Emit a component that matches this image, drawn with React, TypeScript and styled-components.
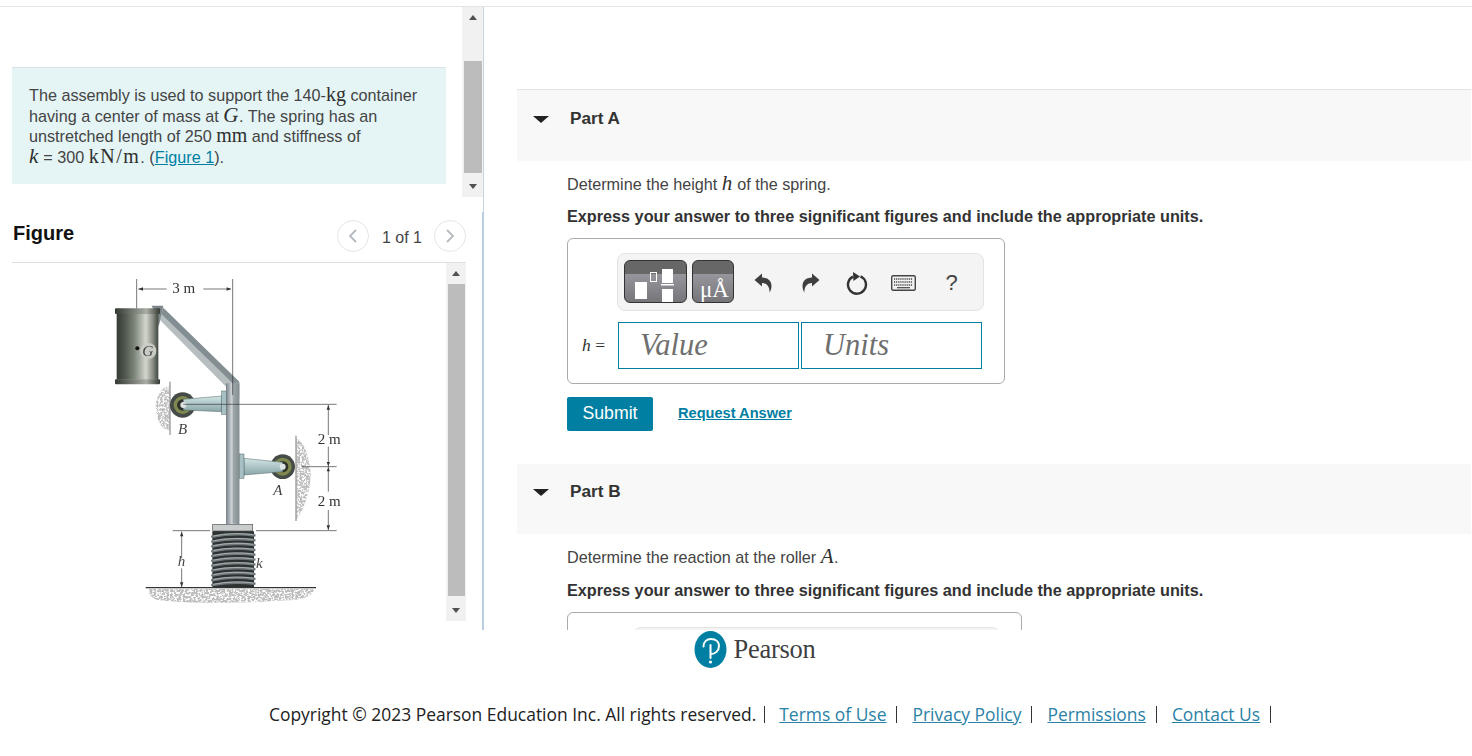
import React from "react";
import styled, { createGlobalStyle } from "styled-components";

const Global = createGlobalStyle`
  html, body { margin: 0; padding: 0; height: 756px; overflow: hidden; background: #fff; }
  body { font-family: "Liberation Sans", Arial, sans-serif; color: #3d3d3d; }
`;

const Page = styled.div`width: 1472px; height: 756px; display: flex; flex-direction: column; overflow: hidden;`;
const TopBar = styled.div`height: 6px; border-bottom: 1px solid #e2e4e6; flex: none;`;
const Workspace = styled.div`height: 623px; flex: none; display: flex; overflow: hidden;`;
const LeftPane = styled.aside`width: 484px; flex: none; display: flex; flex-direction: column;`;
const TopRegion = styled.div`height: 205px; flex: none; display: flex; align-items: flex-start; border-right: 1px solid #c5d5e3;`;
const IntroColumn = styled.div`width: 462px; flex: none; padding: 60px 16px 0 12px; box-sizing: border-box;`;
const IntroBox = styled.div`
  height: 117px; box-sizing: border-box; background: #e5f5f6; border-top: 1px solid #dbe3e6;
  padding: 17px 10px 0 17px; font-size: 16.2px; line-height: 20.5px; color: #444;
`;
const MathText = styled.span<{ $italic?: boolean; $wide?: boolean }>`
  font-family: "Liberation Serif", "Times New Roman", serif; font-size: ${(p) => (p.$italic ? 21 : 20)}px; color: #2f2f2f;
  font-style: ${(p) => (p.$italic ? "italic" : "normal")};
  letter-spacing: ${(p) => (p.$wide ? "1.5px" : p.$italic ? "0.5px" : "0")};
  line-height: 16px;
`;
const Link = styled.a<{ $bold?: boolean }>`
  color: #007fa3; text-decoration: underline; font-weight: ${(p) => (p.$bold ? 700 : 400)};
`;
const Track = styled.div<{ $height: number; $width: number }>`
  flex: none; width: ${(p) => p.$width}px; height: ${(p) => p.$height}px; background: #f1f1f1;
  display: flex; flex-direction: column; align-items: center; position: relative;
`;
const ArrowCell = styled.div`height: 21px; flex: none; width: 100%; display: flex; align-items: center; justify-content: center;`;
const ArrowUp = styled.span`width: 0; height: 0; border-left: 4.5px solid transparent; border-right: 4.5px solid transparent; border-bottom: 5px solid #505050;`;
const ArrowDown = styled.span`width: 0; height: 0; border-left: 4.5px solid transparent; border-right: 4.5px solid transparent; border-top: 5px solid #505050;`;
const Thumb = styled.div<{ $top: number; $height: number }>`
  width: calc(100% - 3px); height: ${(p) => p.$height}px; margin-top: ${(p) => p.$top}px; background: #bcbcbc; flex: none;
`;
const Spacer = styled.div`flex: 1;`;

const LowerRegion = styled.div`flex: 1; border-right: 2px solid #b9cee0; width: 482px; box-sizing: content-box;`;
const FigureHeader = styled.div`
  margin-left: 12px; width: 454px; height: 48px; padding-bottom: 2px; border-bottom: 1px solid #e0e0e0; box-sizing: content-box;
  display: flex; align-items: center;
`;
const FigureTitle = styled.h2`margin: 0 0 7px 1px; font-size: 20px; line-height: 22px; font-weight: 700; color: #111; flex: 1;`;
const PagerCircle = styled.span`
  width: 30px; height: 30px; border: 1px solid #e6e6e6; border-radius: 50%; flex: none;
  display: flex; align-items: center; justify-content: center;
`;
const PagerText = styled.span`font-size: 16px; color: #444; margin: 4px 12px 0 13px;`;
const FigureBody = styled.div`margin-left: 12px; display: flex; height: 358px; width: 454px;`;
const FigureArea = styled.div`width: 434px; flex: none; padding: 2px 0 0 88px; box-sizing: border-box;`;

const RightPane = styled.main`flex: 1; padding: 82px 1px 0 33px; min-width: 0; overflow: hidden;`;
const PartHeader = styled.div<{ $first?: boolean }>`
  height: ${(p) => (p.$first ? 72 : 70)}px; box-sizing: border-box; background: #f8f8f8;
  border-top: ${(p) => (p.$first ? "1px solid #e2e2e2" : "none")};
  margin-top: ${(p) => (p.$first ? 0 : 33)}px;
  display: flex; align-items: flex-start; padding: ${(p) => (p.$first ? 18 : 17)}px 0 0 16px;
`;
const Caret = styled.span`width: 0; height: 0; border-left: 8px solid transparent; border-right: 8px solid transparent; border-top: 7px solid #222; margin: 8px 21px 0 0;`;
const PartTitle = styled.h3`margin: 0; font-size: 17.2px; line-height: 20px; font-weight: 700; color: #333;`;
const PartBody = styled.section`padding: 13px 0 0 50px;`;
const Prompt = styled.p`margin: 0; font-size: 16.2px; line-height: 20px; color: #444;`;
const Instruction = styled.p<{ $gap: number }>`margin: ${(p) => p.$gap}px 0 0; font-size: 16.23px; line-height: 20px; font-weight: 700; color: #333;`;
const AnswerBox = styled.div<{ $width: number; $tall?: boolean }>`
  width: ${(p) => p.$width}px; height: ${(p) => (p.$tall ? 146 : 40)}px; box-sizing: border-box; margin-top: 12px;
  border: 1px solid #aaa; border-radius: 6px; padding: 14px 0 0 49px; position: relative;
`;
const Toolbar = styled.div`
  width: 367px; height: 58px; box-sizing: border-box; background: #f4f4f4; border: 1px solid #e3e3e3; border-radius: 8px;
  display: flex; align-items: center; padding: 0 0 0 6px;
`;
const MiniToolbar = styled(Toolbar)<{ $offset: number }>`margin-left: ${(p) => p.$offset}px;`;
const TemplateButton = styled.div<{ $width: number }>`
  width: ${(p) => p.$width}px; height: 43px; flex: none; box-sizing: border-box; border: 1px solid #333; border-radius: 6px;
  background: linear-gradient(#676767 0, #676767 13px, #97969c 13px, #76757a 100%); margin: 0 5px 1px 0; overflow: hidden;
  position: relative;
`;
const ToolIcons = styled.div`display: flex; align-items: center; flex: 1; margin-top: 2px;`;
const ToolSlot = styled.span<{ $width: number }>`
  width: ${(p) => p.$width}px; flex: none; display: flex; justify-content: center; align-items: center;
  font-size: 22px; color: #444; height: 30px;
`;
const InputRow = styled.div`display: flex; align-items: center; margin: 11px 0 0 -35px;`;
const InputLabel = styled.span`width: 36px; flex: none; font-family: "Liberation Serif", serif; font-size: 17.5px; color: #333;`;
const FieldBox = styled.div`
  width: 181px; height: 47px; box-sizing: border-box; border: 1px solid #007fa3; margin-right: 2px; padding: 0 0 0 21px;
  display: flex; align-items: center; font-family: "Liberation Serif", serif; font-style: italic; font-size: 30.5px; color: #6f6f6f;
`;
const Actions = styled.div`display: flex; align-items: center; margin-top: 13px; height: 34px;`;
const SubmitButton = styled.div`
  width: 86px; height: 34px; padding-bottom: 2px; box-sizing: border-box; background: #007fa3; border-radius: 2px; color: #fff; font-size: 17.7px;
  display: flex; align-items: center; justify-content: center; margin-right: 25px;
`;
const ActionLink = styled(Link)`font-size: 14.6px; margin-top: -2px;`;

const Footer = styled.footer`flex: 1; display: flex; flex-direction: column; align-items: center; min-height: 0;`;
const Brand = styled.div`display: flex; align-items: center; height: 38px; margin: 0 0 0 37px; gap: 7px;`;
const BrandName = styled.span`font-family: "Liberation Serif", serif; font-size: 26.5px; color: #3f3f3f; letter-spacing: -0.3px;`;
const Legal = styled.div`
  font-family: "Open Sans", sans-serif; font-size: 17.45px; color: #222; margin: 34px 0 0 83px; white-space: nowrap; display: flex; line-height: 24px;
`;
const LegalLink = styled.a`color: #2a82a6; text-decoration: underline;`;
const LegalSep = styled.span<{ $first?: boolean }>`
  border-left: 1.5px solid #333; height: 17px; margin: 4px ${(p) => (p.$first ? 14 : 15)}px 0 ${(p) => (p.$first ? 8 : 10)}px;
`;

const Chevron = ({ dir }: { dir: "l" | "r" }) => (
  <svg width="12" height="16" viewBox="0 0 12 16">
    <path d={dir === "l" ? "M9 2 L3 8 L9 14" : "M3 2 L9 8 L3 14"} fill="none" stroke="#b5b9c0" strokeWidth="1.8" />
  </svg>
);

const Drawing = () => (
  <svg width="260" height="350" viewBox="0 0 780 1050">
    <defs>
      <linearGradient id="can" x1="0" x2="1" y1="0" y2="0">
        <stop offset="0" stopColor="#343a33" /><stop offset=".22" stopColor="#545c50" /><stop offset=".42" stopColor="#7b8377" />
        <stop offset=".7" stopColor="#d3d6cd" /><stop offset=".86" stopColor="#8d9389" /><stop offset="1" stopColor="#3f463d" />
      </linearGradient>
      <linearGradient id="post" x1="0" x2="1" y1="0" y2="0">
        <stop offset="0" stopColor="#78828a" /><stop offset=".45" stopColor="#d3d8da" /><stop offset="1" stopColor="#7a8488" />
      </linearGradient>
      <linearGradient id="arm" x1="0" x2="0" y1="0" y2="1">
        <stop offset="0" stopColor="#d2e5e5" /><stop offset="1" stopColor="#8aa6a8" />
      </linearGradient>
      <linearGradient id="cap" x1="0" x2="1" y1="0" y2="0">
        <stop offset="0" stopColor="#333932" /><stop offset=".7" stopColor="#a9ada4" /><stop offset="1" stopColor="#333932" />
      </linearGradient>
      <filter id="soft"><feGaussianBlur stdDeviation="1.6" /></filter>
      <filter id="txt"><feGaussianBlur stdDeviation=".8" /></filter>
      <filter id="speck" x="-5%" y="-5%" width="110%" height="110%">
        <feTurbulence type="fractalNoise" baseFrequency=".16" numOctaves="2" seed="4" result="n" />
        <feColorMatrix in="n" values="0 0 0 0 1 0 0 0 0 1 0 0 0 0 1 0 0 0 5 -2.2" result="w" />
        <feComposite in="w" in2="SourceAlpha" operator="in" result="ws" />
        <feMerge result="m"><feMergeNode in="SourceGraphic" /><feMergeNode in="ws" /></feMerge>
        <feGaussianBlur in="m" stdDeviation="2" />
      </filter>
    </defs>
    <g filter="url(#speck)" fill="#bcbcbc">
      <path d="M208 362 C185 365 178 385 170 405 C162 430 172 470 190 490 L208 495 Z" />
      <path d="M590 522 C612 530 625 570 632 620 C632 670 615 730 590 762 Z" />
      <path d="M143 972 H642 C640 990 615 1005 560 1006 C400 1018 240 1014 170 1004 C152 998 145 985 143 972 Z" />
    </g>
    <g filter="url(#soft)">
      <path d="M185 130 L418 352 V400 H378 V365 L180 165 Z" fill="#b7bec0" />
      <rect x="378" y="355" width="40" height="422" fill="url(#post)" />
      <path d="M190 128 L418 350 L400 356 L185 148 Z" fill="#838e92" />
      <path d="M398 345 L418 352 V775 H398 Z" fill="#8b9599" opacity=".65" />
      <path d="M155 122 H190 L176 185 L168 150 Z" fill="#7c8689" />
      <rect x="50" y="146" width="125" height="198" fill="url(#can)" />
      <rect x="45" y="130" width="135" height="17" rx="3" fill="url(#cap)" />
      <rect x="45" y="343" width="135" height="15" rx="3" fill="url(#cap)" />
      <circle cx="145" cy="258" r="24" fill="#c8ccc4" />
      <circle cx="248" cy="420" r="38" fill="#454b46" />
      <circle cx="248" cy="420" r="27" fill="#7f8850" />
      <circle cx="248" cy="420" r="17" fill="#2f332c" />
      <path d="M250 403 L365 393 V440 L250 435 Z" fill="url(#arm)" stroke="#566" strokeWidth="1.5" />
      <circle cx="250" cy="420" r="9" fill="#dfe4e4" />
      <rect x="365" y="378" width="14" height="70" fill="#a6c0c3" stroke="#566" strokeWidth="1.5" />
      <circle cx="548" cy="605" r="37" fill="#454b46" />
      <circle cx="548" cy="605" r="27" fill="#7f8850" />
      <circle cx="548" cy="605" r="17" fill="#2f332c" />
      <path d="M432 580 L548 592 V620 L432 630 Z" fill="url(#arm)" stroke="#566" strokeWidth="1.5" />
      <circle cx="548" cy="605" r="9" fill="#dfe4e4" />
      <rect x="418" y="567" width="14" height="73" fill="#a6c0c3" stroke="#566" strokeWidth="1.5" />
      <rect x="337" y="798" width="125" height="170" rx="3" fill="#2c3031" />
      <rect x="338" y="778" width="120" height="20" fill="#c9cdce" stroke="#555" strokeWidth="2" />
      {Array.from({ length: 11 }, (_, i) => (
        <g key={i} fill="none">
          <path d={`M337 ${815 + i * 14.5} Q400 ${803 + i * 14.5} 463 ${811 + i * 14.5}`} stroke="#70777a" strokeWidth="8" strokeLinecap="round" />
          <path d={`M340 ${813 + i * 14.5} Q400 ${801 + i * 14.5} 460 ${809 + i * 14.5}`} stroke="#b4babb" strokeWidth="2.5" />
        </g>
      ))}
    </g>
    <circle cx="112" cy="250" r="6" fill="#111" />
    <g stroke="#333" strokeWidth="2" fill="none">
      <path d="M110 42 V130 M398 42 V390 M115 72 H200 M310 72 H392" />
      <path d="M210 350 V510 M588 512 V768" />
      <path d="M250 418 H710 M605 605 H710 M218 797 H330 M468 797 H710" />
      <path d="M685 420 V510 M685 545 V680 M685 735 V795 M245 800 V880 M245 910 V966" />
      <path d="M137 968 H648" strokeWidth="4" />
    </g>
    <g fill="#333">
      <path d="M115 72 l14 -5 v10 Z M394 72 l-14 -5 v10 Z M685 420 l-5 14 h10 Z M685 795 l-5 -14 h10 Z M685 603 l-5 -12 h10 Z M685 607 l-5 12 h10 Z M245 800 l-5 14 h10 Z M245 966 l-5 -14 h10 Z" />
    </g>
    <g fontFamily="'Liberation Serif', serif" fill="#333" fontSize="45" filter="url(#txt)">
      <text x="217" y="85">3 m</text>
      <text x="653" y="538">2 m</text>
      <text x="653" y="724">2 m</text>
      <g fontStyle="italic" fill="#444">
        <text x="127" y="272" fontSize="46">G</text>
        <text x="234" y="506">B</text>
        <text x="520" y="690">A</text>
        <text x="233" y="904">h</text>
        <text x="468" y="908">k</text>
      </g>
    </g>
  </svg>
);

const TemplateGlyph = () => (
  <svg width="61" height="41" viewBox="0 0 61 41" style={{ display: "block" }}>
    <rect x="10" y="21" width="12" height="17" fill="#fff" />
    <rect x="25.5" y="11.5" width="6" height="9" fill="none" stroke="#fff" strokeWidth="1" />
    <rect x="37" y="8" width="11" height="14" fill="#fff" />
    <rect x="36" y="23" width="13" height="1.5" fill="#fff" />
    <rect x="37" y="28" width="11" height="13" fill="#fff" />
  </svg>
);

const UnitsGlyph = styled.span`
  position: absolute; left: 7px; bottom: 0; font-family: "Liberation Serif", serif; color: #fff; font-size: 23px; line-height: 24px; white-space: nowrap;
`;

const Undo = ({ flip }: { flip?: boolean }) => (
  <svg width="18" height="20" viewBox="0 0 18 20" style={flip ? { transform: "scaleX(-1)" } : undefined}>
    <path d="M0.5 7 L8 0.5 V4.5 C14 4.5 17.5 8 17.5 13 C17.5 15.5 16.8 17.8 15.6 19.5 C15.8 14.5 13.5 10 8 10 V13.5 Z" fill="#3f3f3f" />
  </svg>
);

const Reset = () => (
  <svg width="22" height="24" viewBox="0 0 22 24">
    <path d="M7 5.6 A9 9 0 1 0 14.5 5.4" fill="none" stroke="#333" strokeWidth="2.4" />
    <path d="M7 1 L14 5.4 L7.4 10 Z" fill="#333" />
  </svg>
);

const Keyboard = () => (
  <svg width="25" height="16" viewBox="0 0 25 16">
    <rect x=".7" y=".7" width="23.6" height="14.6" rx="1.5" fill="#f2f2f2" stroke="#444" strokeWidth="1.4" />
    <path d="M3 4 H22 M3 7 H22 M3 10 H22" stroke="#444" strokeWidth="1.5" strokeDasharray="1.2 .9" />
    <path d="M6 12.7 H19" stroke="#444" strokeWidth="1.2" />
  </svg>
);

const PearsonLogo = () => (
  <svg width="33" height="37" viewBox="0 0 33 37">
    <ellipse cx="16.5" cy="18.5" rx="16" ry="18.5" fill="#007fa3" />
    <path d="M9.5 15.5 C9.5 10.5 13 8 17 8 C22 8 25 11 25 15 C25 20 21 23 17 23 M16.5 14 V27" fill="none" stroke="#fff" strokeWidth="2" strokeLinecap="round" />
    <circle cx="16.5" cy="31" r="1.6" fill="#fff" />
  </svg>
);

const Tools = () => (
  <>
    <TemplateButton $width={63}><TemplateGlyph /></TemplateButton>
    <TemplateButton $width={42}><UnitsGlyph>μÅ</UnitsGlyph></TemplateButton>
    <ToolIcons>
      <ToolSlot $width={48}><Undo /></ToolSlot>
      <ToolSlot $width={47}><Undo flip /></ToolSlot>
      <ToolSlot $width={46}><Reset /></ToolSlot>
      <ToolSlot $width={47}><Keyboard /></ToolSlot>
      <ToolSlot $width={49}>?</ToolSlot>
    </ToolIcons>
  </>
);

export default function App() {
  return (
    <Page>
      <Global />
      <TopBar />
      <Workspace>
        <LeftPane>
          <TopRegion>
            <IntroColumn>
              <IntroBox>
                The assembly is used to support the 140-<MathText>kg</MathText> container having a center of mass at{" "}
                <MathText $italic>G</MathText>. The spring has an unstretched length of 250 <MathText>mm</MathText> and stiffness of{" "}
                <br />
                <MathText $italic>k</MathText> = 300 <MathText $wide>kN/m</MathText>. (<Link href="#">Figure 1</Link>).
              </IntroBox>
            </IntroColumn>
            <Track $width={21} $height={190}>
              <ArrowCell><ArrowUp /></ArrowCell>
              <Thumb $top={33} $height={112} />
              <Spacer />
              <ArrowCell><ArrowDown /></ArrowCell>
            </Track>
          </TopRegion>
          <LowerRegion>
            <FigureHeader>
              <FigureTitle>Figure</FigureTitle>
              <PagerCircle><Chevron dir="l" /></PagerCircle>
              <PagerText>1 of 1</PagerText>
              <PagerCircle><Chevron dir="r" /></PagerCircle>
            </FigureHeader>
            <FigureBody>
              <FigureArea><Drawing /></FigureArea>
              <Track $width={20} $height={358}>
                <ArrowCell><ArrowUp /></ArrowCell>
                <Thumb $top={0} $height={312} />
                <Spacer />
                <ArrowCell><ArrowDown /></ArrowCell>
              </Track>
            </FigureBody>
          </LowerRegion>
        </LeftPane>
        <RightPane>
          <PartHeader $first>
            <Caret /><PartTitle>Part A</PartTitle>
          </PartHeader>
          <PartBody>
            <Prompt>Determine the height <MathText $italic>h</MathText> of the spring.</Prompt>
            <Instruction $gap={12}>Express your answer to three significant figures and include the appropriate units.</Instruction>
            <AnswerBox $width={438} $tall>
              <Toolbar><Tools /></Toolbar>
              <InputRow>
                <InputLabel><i>h</i> =</InputLabel>
                <FieldBox>Value</FieldBox>
                <FieldBox>Units</FieldBox>
              </InputRow>
            </AnswerBox>
            <Actions>
              <SubmitButton>Submit</SubmitButton>
              <ActionLink $bold href="#">Request Answer</ActionLink>
            </Actions>
          </PartBody>
          <PartHeader>
            <Caret /><PartTitle>Part B</PartTitle>
          </PartHeader>
          <PartBody>
            <Prompt>Determine the reaction at the roller <MathText $italic>A</MathText>.</Prompt>
            <Instruction $gap={13}>Express your answer to three significant figures and include the appropriate units.</Instruction>
            <AnswerBox $width={455}>
              <MiniToolbar $offset={16} />
            </AnswerBox>
          </PartBody>
        </RightPane>
      </Workspace>
      <Footer>
        <Brand>
          <PearsonLogo />
          <BrandName>Pearson</BrandName>
        </Brand>
        <Legal>
          <span>Copyright © 2023 Pearson Education Inc. All rights reserved.</span><LegalSep $first />
          <LegalLink href="#">Terms of Use</LegalLink><LegalSep />
          <LegalLink href="#">Privacy Policy</LegalLink><LegalSep />
          <LegalLink href="#">Permissions</LegalLink><LegalSep />
          <LegalLink href="#">Contact Us</LegalLink><LegalSep />
        </Legal>
      </Footer>
    </Page>
  );
}
